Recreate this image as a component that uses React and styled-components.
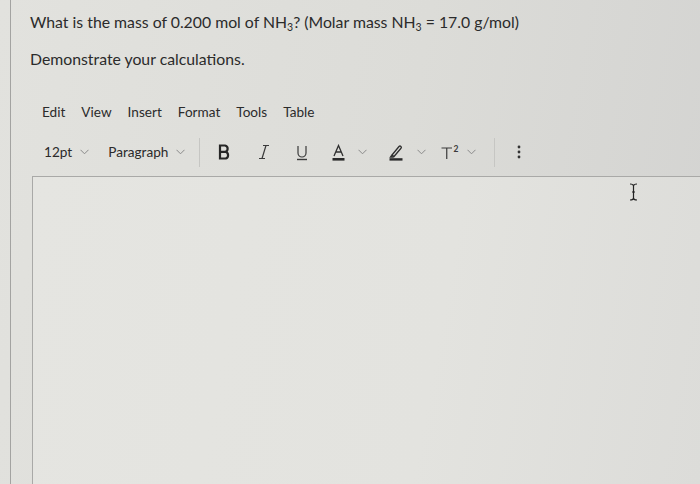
import React from 'react'
import styled, { createGlobalStyle } from 'styled-components'

const Global = createGlobalStyle`
  html, body {
    margin: 0;
    padding: 0;
  }
  body {
    width: 700px;
    height: 484px;
    overflow: hidden;
    background: linear-gradient(100deg, #e2e2de 0%, #dcdcd8 55%, #d3d3d1 100%);
    font-family: Lato, "Open Sans", "Liberation Sans", sans-serif;
    color: #2b2b2b;
  }
`

const Frame = styled.div`
  margin-left: 10px;
  height: 484px;
  overflow: hidden;
  border-left: 1px solid #a3a3a1;
  padding: 12px 0 0 19px;
  box-sizing: border-box;
  display: flex;
  flex-direction: column;
`

const Question = styled.p`
  margin: 0;
  font-size: 15.8px;
  line-height: 20px;
  sub {
    font-size: 10.5px;
    vertical-align: -3px;
    line-height: 0;
  }
`

const Prompt = styled(Question)`
  margin-top: 17px;
`

const MenuBar = styled.nav`
  display: flex;
  gap: 16px;
  margin: 34px 0 0 12px;
  font-size: 13.6px;
  line-height: 18px;
`

const MenuItem = styled.span``

const Toolbar = styled.div`
  display: flex;
  align-items: center;
  height: 30px;
  margin: 16px 0 0 14px;
  font-size: 13.6px;
`

const Select = styled.span`
  display: flex;
  align-items: center;
  gap: 8px;
  margin-right: ${p => p.$gap || 0}px;
`

const Chevron = () => (
  <svg width="9" height="6" viewBox="0 0 9 6" fill="none" stroke="#8a8a8a" strokeWidth="1">
    <path d="M0.5 0.8 L4.5 4.8 L8.5 0.8" />
  </svg>
)

const Divider = styled.span`
  width: 1px;
  height: 29px;
  background: #c6c6c3;
  margin: 0 ${p => p.$right}px 0 0;
`

const Tool = styled.span`
  display: flex;
  align-items: center;
  gap: ${p => p.$inner || 0}px;
  margin-right: ${p => p.$gap}px;
  color: #2a2a2a;
`

const Bold = () => (
  <svg width="13" height="16" viewBox="0 0 13 16" fill="none" stroke="#262626" strokeWidth="2.2">
    <path d="M2 1.5 H7 A3.2 3.2 0 0 1 7 7.8 H2 Z M2 7.8 H7.8 A3.6 3.6 0 0 1 7.8 14.5 H2 Z" />
  </svg>
)

const Italic = () => (
  <svg width="12" height="16" viewBox="0 0 12 16" fill="none" stroke="#3a3a3a" strokeWidth="1.2">
    <path d="M5 1.5 H11 M1 14.5 H7 M8 1.5 L4 14.5" />
  </svg>
)

const Underline = () => (
  <svg width="12" height="17" viewBox="0 0 12 17" fill="none" stroke="#3a3a3a" strokeWidth="1.2">
    <path d="M2 2 V9 A4 4 0 0 0 10 9 V2" />
    <path d="M1 15.5 H11" strokeWidth="1.4" />
  </svg>
)

const TextColor = () => (
  <svg width="13" height="17" viewBox="0 0 13 17" fill="none" stroke="#2f2f2f" strokeWidth="1.3">
    <path d="M2 12 L6.5 1.5 L11 12 M3.8 8 H9.2" />
    <rect x="0.5" y="14" width="12" height="2.6" fill="#2a2a2a" stroke="none" />
  </svg>
)

const Highlight = () => (
  <svg width="14" height="17" viewBox="0 0 14 17" fill="none" stroke="#2f2f2f" strokeWidth="1.3">
    <path d="M3 11 L10 2.5 A1.3 1.3 0 0 1 12 4.3 L5 12.5 Z M3 11 L1.5 13 L4 13 L5 12.5" />
    <rect x="0.5" y="14.2" width="13" height="2.4" fill="#2a2a2a" stroke="none" />
  </svg>
)

const Superscript = () => (
  <svg width="20" height="16" viewBox="0 0 20 16" fill="none" stroke="#3a3a3a" strokeWidth="1.2">
    <path d="M0.5 4 H11 M5.75 4 V15" />
    <text x="12.5" y="7.5" fontSize="8.5" fill="#3a3a3a" stroke="none" fontFamily="Lato, sans-serif" fontWeight="700">2</text>
  </svg>
)

const Kebab = () => (
  <svg width="4" height="14" viewBox="0 0 4 14" fill="#333">
    <circle cx="2" cy="2" r="1.4" />
    <circle cx="2" cy="7" r="1.4" />
    <circle cx="2" cy="12" r="1.4" />
  </svg>
)

const Editor = styled.div`
  flex: 1;
  margin: 9px 0 0 2px;
  border: 1px solid #a9a9a7;
  border-right: none;
  border-bottom: none;
  background: linear-gradient(100deg, #e5e5e1 0%, #e3e3df 60%, #dcdcd9 100%);
  position: relative;
`

const Cursor = styled.svg`
  position: absolute;
  left: 596px;
  top: 6px;
`

export default function App() {
  return (
    <>
      <Global />
      <Frame>
        <Question>
          What is the mass of 0.200 mol of NH<sub>3</sub>? (Molar mass NH<sub>3</sub> = 17.0 g/mol)
        </Question>
        <Prompt>Demonstrate your calculations.</Prompt>
        <MenuBar>
          {['Edit', 'View', 'Insert', 'Format', 'Tools', 'Table'].map(m => (
            <MenuItem key={m}>{m}</MenuItem>
          ))}
        </MenuBar>
        <Toolbar>
          <Select $gap={19}>12pt <Chevron /></Select>
          <Select $gap={14}>Paragraph <Chevron /></Select>
          <Divider $right={18} />
          <Tool $gap={27}><Bold /></Tool>
          <Tool $gap={26}><Italic /></Tool>
          <Tool $gap={24}><Underline /></Tool>
          <Tool $gap={22} $inner={13}><TextColor /><Chevron /></Tool>
          <Tool $gap={15} $inner={14}><Highlight /><Chevron /></Tool>
          <Tool $gap={18} $inner={6}><Superscript /><Chevron /></Tool>
          <Divider $right={22} />
          <Tool $gap={0}><Kebab /></Tool>
        </Toolbar>
        <Editor>
          <Cursor width="9" height="18" viewBox="0 0 9 18" fill="none" stroke="#222" strokeWidth="1.2">
            <path d="M1 1 Q4.5 1 4.5 3 V15 Q4.5 17 1 17 M8 1 Q4.5 1 4.5 3 M8 17 Q4.5 17 4.5 15 M3 9 H6" />
          </Cursor>
        </Editor>
      </Frame>
    </>
  )
}
